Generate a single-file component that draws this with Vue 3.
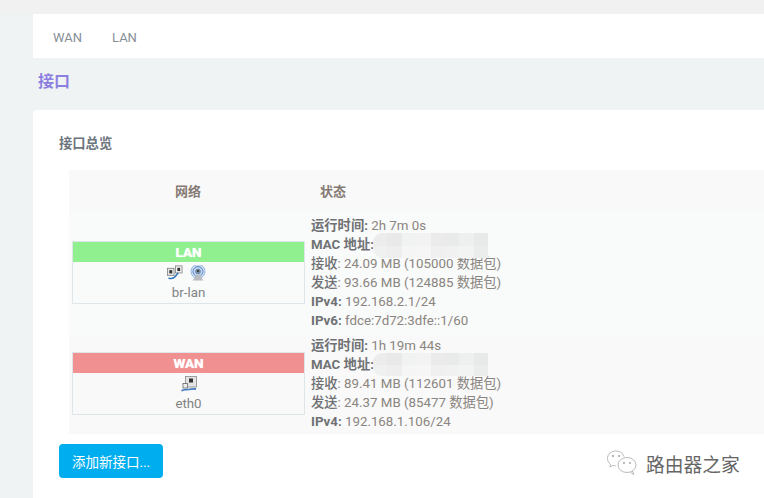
<script setup>
const rows = [
  { name: 'LAN', color: 'green', dev: 'br-lan', icons: ['bridge', 'wifi'], tall: true,
    lines: [
      ['运行时间:', ' 2h 7m 0s', true], ['MAC 地址:', '', true],
      ['接收', ': 24.09 MB (105000 数据包)', false], ['发送', ': 93.66 MB (124885 数据包)', false],
      ['IPv4:', ' 192.168.2.1/24', true], ['IPv6:', ' fdce:7d72:3dfe::1/60', true]
    ] },
  { name: 'WAN', color: 'red', dev: 'eth0', icons: ['eth'], tall: false,
    lines: [
      ['运行时间:', ' 1h 19m 44s', true], ['MAC 地址:', '', true],
      ['接收', ': 89.41 MB (112601 数据包)', false], ['发送', ': 24.37 MB (85477 数据包)', false],
      ['IPv4:', ' 192.168.1.106/24', true]
    ] }
]
const mosaic = [
  ['#ececed', '#e9e9ea', '#f1f2f2', '#f3f3f3', '#ebebeb', '#e9eaea', '#eeefef', '#e8e9e9'],
  ['#eff0f0', '#eeeeee', '#f5f5f5', '#f6f6f6', '#f0f0f0', '#f1f1f1', '#f2f3f3', '#ebecec']
]
</script>

<template>
  <div class="page">
    <div class="topstrip"></div>
    <main class="main">
      <nav class="tabs">
        <a class="tab">WAN</a>
        <a class="tab">LAN</a>
      </nav>
      <h2 class="title">接口</h2>
      <section class="card">
        <h3 class="card-title">接口总览</h3>
        <div class="table">
          <div class="row head">
            <div class="col-net">网络</div>
            <div class="col-status">状态</div>
          </div>
          <div v-for="r in rows" :key="r.name" class="row" :class="r.tall ? 'row-tall' : 'row-short'">
            <div class="col-net cell-net">
              <div class="badge">
                <div class="badge-head" :class="r.color">{{ r.name }}</div>
                <div class="badge-icons">
                  <template v-for="ic in r.icons" :key="ic">
                    <svg v-if="ic === 'bridge'" width="16" height="15" viewBox="0 0 17 15">
                      <rect x="0.5" y="3" width="7" height="7.5" fill="#e6e6e6" stroke="#777" stroke-width=".8" />
                      <rect x="2.5" y="5" width="3" height="3.5" fill="#333" />
                      <rect x="9" y="0.5" width="7" height="7.5" fill="#f4f4f4" stroke="#777" stroke-width=".8" />
                      <rect x="11" y="2.5" width="3" height="3.5" fill="#333" />
                      <path d="M1.500 13.500c3 1 6 0 7.500-2s2-3 3-3.500" fill="none" stroke="#2f74c0" stroke-width="1.600" />
                    </svg>
                    <svg v-else-if="ic === 'wifi'" width="16" height="16" viewBox="0 0 16 16">
                      <circle cx="8" cy="6.500" r="7" fill="#dbe6f3" stroke="#7fa6d8" stroke-width=".8" />
                      <circle cx="8" cy="6.500" r="5" fill="#c3d5ec" stroke="#4f86cc" />
                      <circle cx="8" cy="6.500" r="2.500" fill="#8a97a8" stroke="#4f7fbd" stroke-width=".6" />
                      <path d="M2.500 15.500h11l-2-2.500-1-3h-5l-1 3z" fill="#b9bcc1" />
                      <circle cx="8" cy="6" r="1.300" fill="#444" />
                    </svg>
                    <svg v-else width="16" height="16" viewBox="0 0 16 16">
                      <rect x="4.500" y="0.500" width="11" height="10.500" fill="#e4e4e4" stroke="#8a8a8a" stroke-width=".8" />
                      <rect x="8" y="2.500" width="4" height="4" fill="#333" />
                      <rect x="2" y="7.500" width="4.500" height="4.500" fill="#eee" stroke="#666" stroke-width=".8" />
                      <path d="M.5 15c2-2.500 5-1 7-1.500s4-1 7.500-.5" fill="none" stroke="#4a7fc4" stroke-width="1.800" />
                    </svg>
                  </template>
                </div>
                <div class="badge-dev">{{ r.dev }}</div>
              </div>
            </div>
            <div class="col-status cell-status">
              <div v-for="l in r.lines" :key="l[0]" class="line">
                <span :class="{ strong: l[2] }" class="label">{{ l[0] }}</span>{{ l[1] }}
              </div>
              <div class="mac-mask">
                <div v-for="(m, i) in mosaic" :key="i" class="mask-row">
                  <i v-for="(c, j) in m" :key="j" :style="{ background: c }"></i>
                </div>
              </div>
            </div>
          </div>
        </div>
        <button class="add">添加新接口...</button>
      </section>
    </main>
    <div class="mark">
      <svg width="32" height="27" viewBox="0 0 31 27" fill="none" stroke="#a8a8a8" stroke-width=".8">
        <path d="M9.500 1C4.500 1 1 4.300 1 8.500c0 2.500 1.200 4.400 3 5.700L3.300 17l3-1.600c1 .3 2 .4 3 .4" />
        <path d="M9.500 1c4 0 7.400 2.300 8.200 5.700" />
        <ellipse cx="20.500" cy="15" rx="9" ry="7.500" />
        <path d="M26 21l1.500 3.500-3.500-2" />
        <circle cx="6.500" cy="6" r=".8" fill="#a8a8a8" />
        <circle cx="12.500" cy="6" r=".8" fill="#a8a8a8" />
        <circle cx="17.500" cy="13" r=".7" fill="#a8a8a8" />
        <circle cx="23.500" cy="13" r=".7" fill="#a8a8a8" />
      </svg>
      <span>路由器之家</span>
    </div>
  </div>
</template>

<style scoped>
.page {
  position: relative;
  width: 764px;
  height: 498px;
  overflow: hidden;
  background: #f0f3f4;
  font-family: Roboto, "Noto Sans CJK SC", sans-serif;
  color: #797979;
  font-size: 14px;
}
.topstrip { height: 14px; background: #f1f1f1; }
.main { padding-left: 33px; }
.tabs {
  height: 44px;
  background: #fff;
  display: flex;
  gap: 30px;
  padding: 2px 0 0 20px;
  box-sizing: border-box;
}
.tab { font-size: 13px; color: #868e96; line-height: 44px; }
.title {
  margin: 0;
  height: 52px;
  padding-left: 5px;
  font-size: 16px;
  line-height: 48px;
  font-weight: 700;
  color: #8b80e0;
}
.card {
  background: #fff;
  border-radius: 4px 0 0 0;
  padding: 0 0 20px 26px;
  height: 388px;
}
.card-title {
  margin: 0;
  height: 60px;
  padding-top: 25px;
  box-sizing: border-box;
  font-size: 13.300px;
  line-height: 18px;
  font-weight: 700;
  color: #6c757d;
}
.table { margin-left: 10px; background: #f9f9f9; }
.row { display: flex; }
.head { height: 42px; padding-bottom: 2px; box-sizing: border-box; align-items: center; font-size: 13px; font-weight: 700; color: #857a74; }
.row-tall { height: 123px; background: #f9fafa; }
.row-short { height: 99px; background: #f9f9f9; }
.col-net { width: 239px; flex: none; text-align: center; }
.head .col-net { padding-right: 1px; box-sizing: border-box; }
.col-status { padding-left: 3px; }
.head .col-status { padding-left: 12px; }
.cell-net { display: flex; align-items: center; padding: 0 0 2px 3px; box-sizing: border-box; }
.badge {
  width: 233px;
  border: 1px solid #dfe6e9;
  box-sizing: border-box;
  text-align: center;
}
.badge-head {
  height: 20px;
  font-size: 13.500px;
  line-height: 20px;
  font-weight: 700;
  color: #fff;
  text-shadow: 0 0 1px #fff;
}
.green { background: #90f090; }
.red { background: #f09090; }
.badge-icons { height: 21px; display: flex; justify-content: center; align-items: center; gap: 7px; }
.row-tall .badge-icons { padding-right: 4px; }
.badge-dev { font-size: 13.300px; line-height: 20px; height: 20px; color: #808284; }
.cell-status { position: relative; padding-top: 4px; }
.row-short .cell-status { padding-top: 1px; }
.line { height: 19px; line-height: 19px; font-size: 13.300px; white-space: pre; color: #8a8580; }
.strong { font-weight: 700; color: #6f7174; }
.label:not(.strong) { color: #6f7174; font-weight: 500; }
.mac-mask {
  position: absolute;
  left: 65px;
  top: 21px;
  width: 115px;
  height: 25px;
  border-radius: 9px 0 0 9px;
  overflow: hidden;
  filter: blur(.6px);
}
.row-short .mac-mask { top: 18px; height: 23px; }
.mask-row { display: flex; height: 50%; }
.mask-row i { flex: 1; }
.add {
  display: block;
  margin-top: 10px;
  width: 104px;
  height: 34px;
  border: none;
  border-radius: 4px;
  background: #00aeef;
  color: #fff;
  font-family: inherit;
  font-size: 13.500px;
  padding: 0;
}
.mark {
  position: absolute;
  left: 606px;
  top: 450px;
  display: flex;
  align-items: center;
  gap: 8px;
  color: #666;
  font-size: 18.800px;
  font-family: "Noto Sans CJK SC", sans-serif;
}
</style>
